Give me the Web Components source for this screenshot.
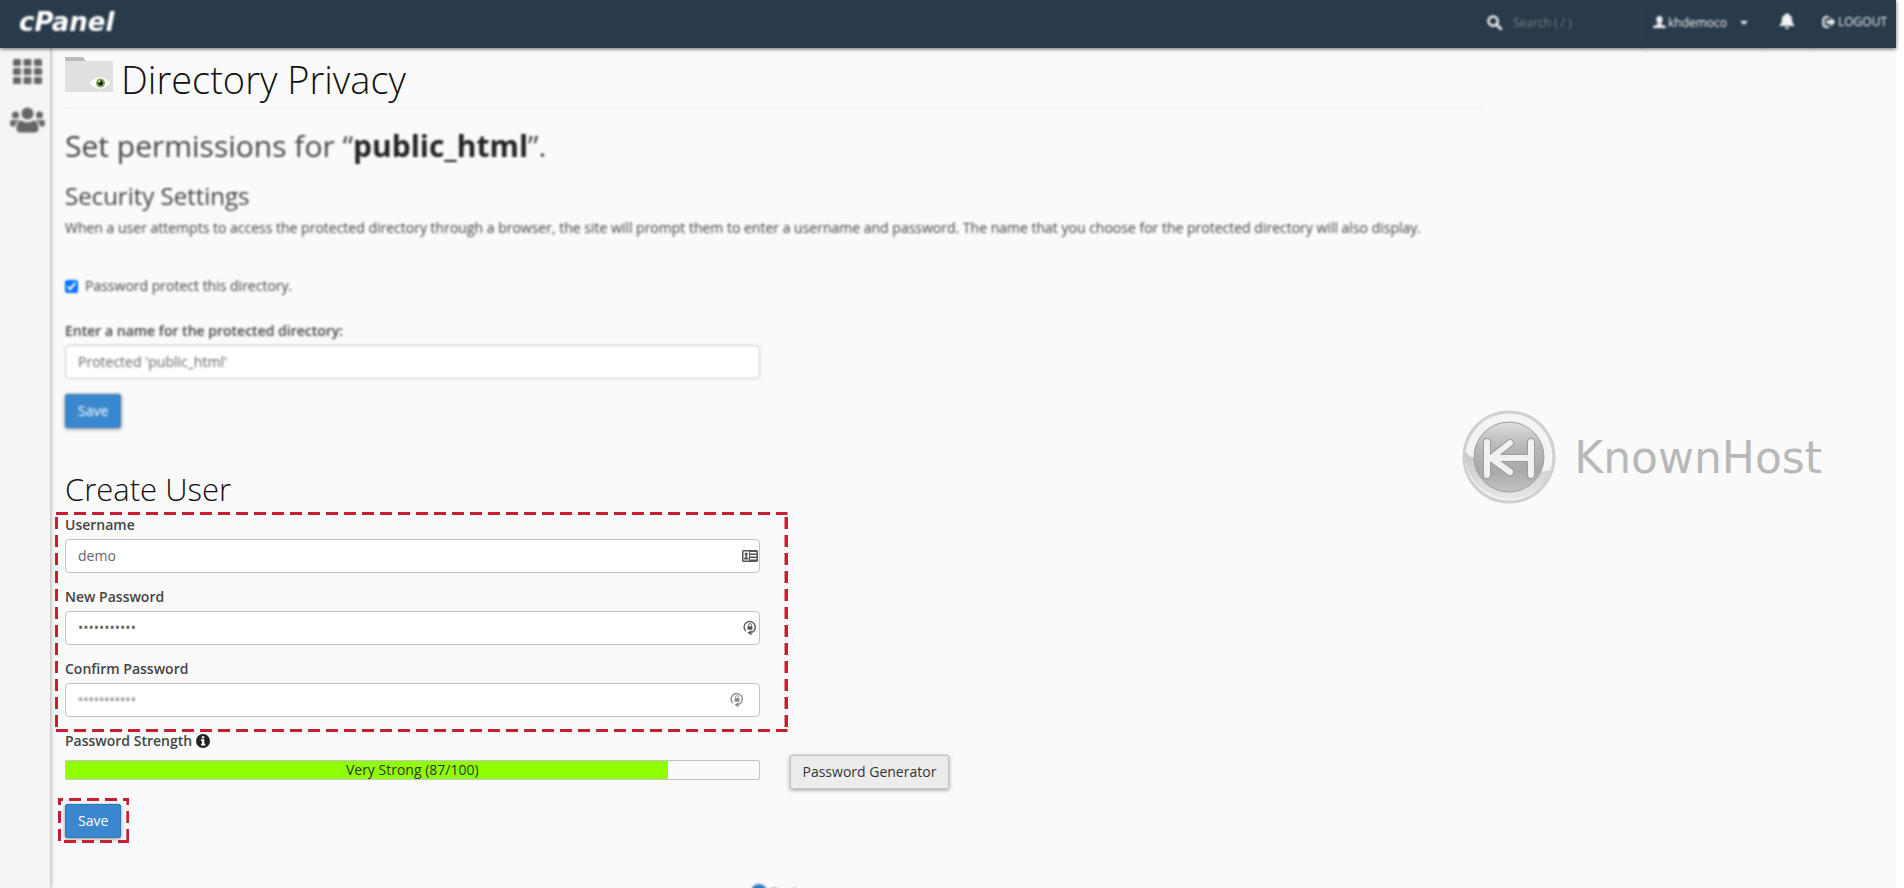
<!DOCTYPE html>
<html lang="en">
<head>
<meta charset="utf-8">
<title>Directory Privacy</title>
<style>
  html, body { margin: 0; height: 100%; }
  body {
    background: #fff;
    color: #333;
    font-family: "Open Sans", "Noto Sans", sans-serif;
    font-size: 14px;
    line-height: 20px;
    overflow: hidden;
  }
</style>
</head>
<body>
<cp-app></cp-app>

<script>
const icons = {
  search: '<svg viewBox="0 0 16 16"><circle cx="6.5" cy="6.5" r="5" fill="none" stroke="currentColor" stroke-width="2.6"/><path d="M10 10l5 5" stroke="currentColor" stroke-width="3" stroke-linecap="round"/></svg>',
  user: '<svg viewBox="0 0 14 14"><path fill="currentColor" d="M7 0c2.3 0 3.400 1.500 3.400 3.700 0 1.800-.8 3.200-1.700 4v1.300l4 1.600c.9.4 1.300 1.100 1.300 2V13H0v-.400c0-.9.4-1.600 1.300-2l4-1.600V7.700c-.9-.8-1.700-2.200-1.700-4C3.600 1.500 4.700 0 7 0z"/></svg>',
  bell: '<svg viewBox="0 0 16 16"><path fill="currentColor" d="M8 0c.8 0 1.200.5 1.200 1.200C11.500 1.800 13 3.500 13 6c0 3.500 1 5 2.500 6.200V13H.5v-.8C2 11 3 9.500 3 6c0-2.500 1.500-4.200 3.800-4.800C6.800.5 7.200 0 8 0zM6 14h4c0 1.200-.9 2-2 2s-2-.8-2-2z"/></svg>',
  logout: '<svg viewBox="0 0 14 14"><path d="M7 2H4.500A3 3 0 0 0 1.500 5v4a3 3 0 0 0 3 3H7" fill="none" stroke="currentColor" stroke-width="2.200"/><path fill="currentColor" d="M4.500 5.300h4V2.500L13.500 7l-5 4.500V8.700h-4z"/></svg>',
  grid: '<svg viewBox="0 0 29 25"><g fill="currentColor"><rect width="8" height="7" rx="1.500"/><rect x="10.500" width="8" height="7" rx="1.500"/><rect x="21" width="8" height="7" rx="1.500"/><rect y="9" width="8" height="7" rx="1.500"/><rect x="10.500" y="9" width="8" height="7" rx="1.500"/><rect x="21" y="9" width="8" height="7" rx="1.500"/><rect y="18" width="8" height="7" rx="1.500"/><rect x="10.500" y="18" width="8" height="7" rx="1.500"/><rect x="21" y="18" width="8" height="7" rx="1.500"/></g></svg>',
  users: '<svg viewBox="0 0 35 26"><g fill="currentColor"><circle cx="17.500" cy="6.500" r="6"/><circle cx="5.500" cy="8" r="3.500"/><circle cx="29.500" cy="8" r="3.500"/><path d="M11.500 13.500c1.600 1.200 3.600 1.800 6 1.800s4.400-.6 6-1.800c4 .5 5 4.500 5 8.500 0 2.200-1.500 3.500-3.700 3.500H10.200C8 25.500 6.500 24.200 6.500 22c0-4 1-8 5-8.500zM2.500 12.500c1 .6 2 .9 3 .9s2-.3 2.700-.8l1.300.4c-2.700 1.400-4.200 3.600-4.500 6.500H3c-2 0-3-1-3-2.800 0-2.200.7-3.900 2.500-4.200zM32.500 12.500c-1 .6-2 .9-3 .9s-2-.3-2.700-.8l-1.300.4c2.700 1.400 4.200 3.600 4.500 6.500h2c2 0 3-1 3-2.800 0-2.200-.7-3.900-2.500-4.200z"/></g></svg>',
  folder: '<svg viewBox="0 0 48 35"><path fill="#bbb" d="M0 0h18l3 4v4H0z"/><path fill="#e0e0e0" d="M0 4h48v31H0z"/><path fill="#fff" d="M25 26c3-4 6-5.500 10-5.500S42 22 45 26c-3 4-6 5.500-10 5.500S28 30 25 26z"/><circle cx="35.500" cy="26" r="4.500" fill="#80a853"/><circle cx="35.500" cy="26" r="2.500" fill="#182818"/><circle cx="34.300" cy="24.600" r="1" fill="#fff"/></svg>',
  card: '<svg viewBox="0 0 16 12"><rect width="16" height="12" rx="1.500" fill="#555"/><path fill="#fff" d="M1.500 1.500H7v9H1.500zM8 2h6.500v1.500H8zM8 5h6.500v1.500H8zM8 8h6.500v1.500H8z"/><circle cx="4.200" cy="4" r="1.600" fill="#555"/><path fill="#555" d="M3.500 5h1.400v2l1.600 1.200v1.300H2V8.200L3.500 7z"/></svg>',
  lock: '<svg viewBox="0 0 14 16"><path d="M2.800 11.200A5.600 5.600 0 1 1 8.500 12.500" fill="none" stroke="#666" stroke-width="1.500"/><path fill="#555" d="M8.500 10.200v5L4.500 12.800z"/><rect x="4.600" y="6.200" width="4.800" height="3.500" fill="#555"/><path d="M5.600 6.500V5a1.400 1.400 0 0 1 2.800 0v1.500" fill="none" stroke="#777"/></svg>',
  info: '<svg viewBox="0 0 14 14"><circle cx="7" cy="7" r="7" fill="#222"/><path fill="#fff" d="M5.800 2.200h2.500v2H5.800zM5 5.300h3.300v4.500h1V11.500H5V9.800h1V7H5z"/></svg>'
};

class CpIcon extends HTMLElement {
  constructor() {
    super();
    this.attachShadow({ mode: 'open' });
  }

  connectedCallback() {
    this.shadowRoot.innerHTML = `
      <style>
        :host { display: inline-block; width: 14px; flex: none; }
        svg { display: block; width: 100%; }
      </style>
      ${icons[this.getAttribute('name')]}
    `;
  }
}

class CpHeader extends HTMLElement {
  constructor() {
    super();
    this.attachShadow({ mode: 'open' });
  }

  connectedCallback() {
    this.shadowRoot.innerHTML = `
      <style>
        :host {
          display: block;
          position: relative;
          z-index: 2;
          background: #293a4a;
          color: #f0f2f4;
          font-size: 12px;
          box-shadow: 0 1px 4px rgba(0, 0, 0, 0.6);
        }
        header {
          display: flex;
          align-items: stretch;
          height: 48px;
          filter: blur(1px);
        }
        a { color: inherit; text-decoration: none; display: flex; align-items: center; }
        .brand {
          margin-right: auto;
          padding: 0 0 4px 19px;
          font: italic bold 26px "DejaVu Sans", sans-serif;
          color: #fff;
        }
        .search { display: flex; align-items: center; gap: 11px; width: 155px; padding-bottom: 3px; }
        .search cp-icon { width: 15px; }
        input {
          width: 110px;
          padding: 0;
          border: 0;
          background: none;
          font: inherit;
          color: inherit;
        }
        input::placeholder { color: #75828e; opacity: 1; }
        button {
          display: flex;
          align-items: center;
          padding: 0 0 3px;
          border: 0;
          border-left: 1px solid #2f4254;
          background: none;
          color: inherit;
          font: inherit;
        }
        .user { width: 121px; padding-left: 10px; gap: 2px; }
        .user cp-icon { width: 13px; }
        .caret {
          margin-left: 11px;
          border: 4px solid transparent;
          border-top-color: currentColor;
          border-bottom: 0;
        }
        .bell { width: 48px; justify-content: center; padding: 0 2px 6px 0; }
        .bell cp-icon { width: 16px; }
        .logout { width: 85px; box-sizing: border-box; padding: 0 0 4px 10px; gap: 2px; border-left: 1px solid #2f4254; }
      </style>
      <header>
        <a class="brand" href="#">cPanel</a>
        <label class="search">
          <cp-icon name="search"></cp-icon>
          <input type="text" placeholder="Search ( / )" aria-label="Search">
        </label>
        <button class="user" type="button"><cp-icon name="user"></cp-icon>khdemoco<span class="caret"></span></button>
        <button class="bell" type="button" aria-label="Notifications"><cp-icon name="bell"></cp-icon></button>
        <a class="logout" href="#"><cp-icon name="logout"></cp-icon>LOGOUT</a>
      </header>
    `;
  }
}

class CpSidebar extends HTMLElement {
  constructor() {
    super();
    this.attachShadow({ mode: 'open' });
  }

  connectedCallback() {
    this.shadowRoot.innerHTML = `
      <style>
        :host {
          display: block;
          flex: none;
          width: 50px;
          background: #f5f5f5;
          color: #666;
          box-shadow: 1px 0 4px rgba(0, 0, 0, 0.3);
        }
        nav {
          display: flex;
          flex-direction: column;
          align-items: center;
          gap: 23px;
          padding: 11px 0 0 5px;
          filter: blur(1px);
        }
        a { color: inherit; }
        cp-icon { display: block; }
        .grid { width: 29px; }
        .users { width: 35px; }
      </style>
      <nav>
        <a href="#" aria-label="Home"><cp-icon class="grid" name="grid"></cp-icon></a>
        <a href="#" aria-label="User Manager"><cp-icon class="users" name="users"></cp-icon></a>
      </nav>
    `;
  }
}

class CpButton extends HTMLElement {
  constructor() {
    super();
    this.attachShadow({ mode: 'open' });
  }

  connectedCallback() {
    this.shadowRoot.innerHTML = `
      <style>
        :host { display: inline-block; }
        button {
          display: block;
          padding: 6px 12px;
          border: 1px solid #2d77b8;
          border-radius: 2px;
          background: #3a87cf;
          color: #fff;
          font: inherit;
          line-height: 20px;
          white-space: nowrap;
          box-shadow: 0 1px 4px rgba(0, 0, 0, 0.4);
        }
        :host([plain]) button {
          border-color: #c4c4c4;
          background: #ececec;
          color: #333;
        }
      </style>
      <button type="button"><slot></slot></button>
    `;
  }
}

class CpField extends HTMLElement {
  constructor() {
    super();
    this.attachShadow({ mode: 'open' });
  }

  connectedCallback() {
    const type = this.getAttribute('type') || 'text';
    const icon = this.getAttribute('icon');
    this.shadowRoot.innerHTML = `
      <style>
        :host { display: block; }
        label {
          display: block;
          margin-bottom: 4px;
          font-weight: 600;
          color: #444;
        }
        .box {
          display: flex;
          align-items: center;
          box-sizing: border-box;
          height: 34px;
          padding: 0 1px 0 12px;
          border: 1px solid #c4c4c4;
          border-radius: 4px;
          background: #fff;
        }
        input {
          flex: 1;
          min-width: 0;
          padding: 0;
          border: 0;
          outline: 0;
          background: none;
          font: inherit;
          color: #666;
        }
        :host([dim]) input { color: #777; filter: blur(1px); }
        cp-icon { width: 14px; margin-right: 1px; }
        cp-icon[name="card"] { width: 16px; margin-right: 0; }
        :host([dim]) cp-icon { margin-right: 14px; opacity: 0.7; }
      </style>
      <label for="input">${this.getAttribute('label')}</label>
      <div class="box">
        <input id="input" type="${type}" value="${this.getAttribute('value') || ''}">
        ${icon ? `<cp-icon name="${icon}"></cp-icon>` : ''}
      </div>
    `;
  }
}

// Dashed red frame laid over whatever is slotted in
class CpCallout extends HTMLElement {
  constructor() {
    super();
    this.attachShadow({ mode: 'open' });
  }

  connectedCallback() {
    this.shadowRoot.innerHTML = `
      <style>
        :host { display: block; position: relative; }
        svg {
          position: absolute;
          inset: -3px -28px -15px -10px;
          width: calc(100% + 38px);
          height: calc(100% + 18px);
          pointer-events: none;
          overflow: hidden;
        }
        :host([tight]) svg {
          inset: -6px -8px -5px -7px;
          width: calc(100% + 15px);
          height: calc(100% + 11px);
        }
        line { stroke: #c41e30; stroke-width: 6; stroke-dasharray: 12 6; }
        .side { stroke-dashoffset: 13; }
        :host([tight]) line { stroke-dashoffset: 8; }
        :host([tight]) .side { stroke-dashoffset: 5; }
        :host([tight]) .bottom { stroke-dashoffset: 13; }
      </style>
      <slot></slot>
      <svg aria-hidden="true">
        <line x1="1" y1="0" x2="100%" y2="0"/>
        <line class="bottom" x1="1" y1="100%" x2="100%" y2="100%"/>
        <line class="side" x1="0" y1="0" x2="0" y2="100%"/>
        <line class="side" x1="100%" y1="0" x2="100%" y2="100%"/>
      </svg>
    `;
  }
}

class CpStrength extends HTMLElement {
  constructor() {
    super();
    this.attachShadow({ mode: 'open' });
  }

  connectedCallback() {
    const value = this.getAttribute('value');
    this.shadowRoot.innerHTML = `
      <style>
        :host { display: block; }
        .label { display: flex; align-items: center; gap: 4px; margin-bottom: 9px; font-weight: 600; color: #444; }
        .bar {
          display: grid;
          height: 18px;
          border: 1px solid #c4c4c4;
          border-radius: 2px;
          line-height: 18px;
          text-align: center;
        }
        .fill, .text { grid-area: 1 / 1; }
        .fill { width: ${value}%; background: #90ff00; }
      </style>
      <div class="label"><span id="label">Password Strength</span><cp-icon name="info"></cp-icon></div>
      <div class="bar" role="meter" aria-labelledby="label" aria-valuemax="100" aria-valuenow="${value}">
        <div class="fill"></div>
        <div class="text">Very Strong (${value}/100)</div>
      </div>
    `;
  }
}

class HostMark extends HTMLElement {
  constructor() {
    super();
    this.attachShadow({ mode: 'open' });
  }

  connectedCallback() {
    this.shadowRoot.innerHTML = `
      <style>
        :host {
          display: flex;
          align-items: center;
          gap: 18px;
          color: #b8b8b8;
          font: 44px "DejaVu Sans", sans-serif;
        }
        svg { width: 94px; height: 94px; flex: none; }
      </style>
      <svg viewBox="0 0 94 94" aria-hidden="true">
        <defs>
          <linearGradient id="disc" x2="0" y2="1"><stop stop-color="#dedede"/><stop offset="0.350" stop-color="#b8b8b8"/><stop offset="0.700" stop-color="#a9a9a9"/><stop offset="1" stop-color="#c4c4c4"/></linearGradient>
          <linearGradient id="ring" x2="0" y2="1"><stop stop-color="#c8c8c8"/><stop offset="1" stop-color="#e6e6e6"/></linearGradient>
        </defs>
        <circle cx="47" cy="47" r="45" fill="#f4f4f4" stroke="#d0d0d0" stroke-width="3"/>
        <path d="M3 42C20 57 50 67 90 60A45 45 0 0 1 3 42z" fill="url(#ring)"/>
        <circle cx="47" cy="47" r="35" fill="url(#disc)" stroke="#9d9d9d"/>
        <g fill="none" stroke-linecap="round" stroke-linejoin="round">
          <path d="M25 32v33M48 33L29 48 48 62M37 48h31M69 32v33" stroke="#9c9c9c" stroke-width="8"/>
          <path d="M25 32v33M48 33L29 48 48 62M37 48h31M69 32v33" stroke="#f1f1f1" stroke-width="6"/>
        </g>
      </svg>
      <span>KnownHost</span>
    `;
  }
}

class CpApp extends HTMLElement {
  constructor() {
    super();
    this.attachShadow({ mode: 'open' });
  }

  connectedCallback() {
    this.shadowRoot.innerHTML = `
      <style>
        :host {
          display: flex;
          flex-direction: column;
          height: 100vh;
          margin-right: 8px;
          background: #fafafa;
        }
        .body { display: flex; flex: 1; min-height: 0; }
        main { position: relative; flex: 1; padding-left: 15px; }
        .content { width: 77.5%; }
        .title {
          display: flex;
          align-items: flex-start;
          gap: 8px;
          padding: 9px 0;
          border-bottom: 1px solid #eee;
        }
        .title cp-icon { width: 48px; }
        h1, h2, h3, p { margin: 0; }
        h1 { padding-top: 2px; font-size: 38px; line-height: 40px; font-weight: 300; color: #111; }
        h2 { font-size: 30px; line-height: 34px; font-weight: 400; }
        h3 { font-size: 24px; line-height: 28px; font-weight: 400; }
        .soft { margin-top: 20px; filter: blur(1px); color: #444; }
        .soft h2 b { font-weight: 700; color: #222; }
        .soft h3 { margin-top: 19px; }
        .soft p { margin-top: 8px; }
        .soft cp-button { margin-top: 15px; }
        .soft cp-field { margin-top: 25px; }
        .check { display: flex; align-items: center; gap: 7px; margin-top: 38px; }
        .check input { width: 13px; height: 13px; margin: 0; }
        .columns {
          display: grid;
          grid-template-columns: 1fr 1fr;
          column-gap: 30px;
        }
        .create { margin-top: 44px; font-size: 31px; font-weight: 300; color: #111; }
        .fields { display: grid; gap: 14px; margin: 9px 0 14px; }
        .generator { margin-top: 24px; }
        .save { width: max-content; margin-top: 15px; }
        cp-button { vertical-align: top; }
        footer {
          margin-top: 45px;
          text-align: center;
          filter: blur(1px);
        }
        footer svg { width: 48px; height: 14px; }
        host-mark { position: absolute; right: 74px; top: 362px; }
      </style>
      <cp-header></cp-header>
      <div class="body">
        <cp-sidebar></cp-sidebar>
        <main>
          <div class="content">
            <div class="title"><cp-icon name="folder"></cp-icon><h1>Directory Privacy</h1></div>
            <section class="soft">
              <h2>Set permissions for “<b>public_html</b>”.</h2>
              <h3>Security Settings</h3>
              <p>When a user attempts to access the protected directory through a browser, the site will prompt them to enter a username and password. The name that you choose for the protected directory will also display.</p>
              <label class="check"><input type="checkbox" checked>Password protect this directory.</label>
              <div class="columns">
                <cp-field label="Enter a name for the protected directory:" value="Protected 'public_html'"></cp-field>
              </div>
              <cp-button>Save</cp-button>
            </section>
            <h2 class="create">Create User</h2>
            <div class="columns">
              <cp-callout class="fields">
                <cp-field label="Username" value="demo" icon="card"></cp-field>
                <cp-field label="New Password" type="password" value="khdemo12345" icon="lock"></cp-field>
                <cp-field label="Confirm Password" type="password" value="khdemo12345" icon="lock" dim></cp-field>
              </cp-callout>
            </div>
            <div class="columns">
              <cp-strength value="87"></cp-strength>
              <cp-button class="generator" plain>Password Generator</cp-button>
            </div>
            <cp-callout class="save" tight><cp-button>Save</cp-button></cp-callout>
            <footer>
              <svg viewBox="0 0 48 14" aria-hidden="true" fill="#2f7fc4"><circle cx="8" cy="8" r="8"/><path d="M18 14V8q0-4 5-4t5 4v6h-3V9q0-2-2-2t-2 2v5zM43 4h2v10h-2z"/></svg>
            </footer>
          </div>
          <host-mark></host-mark>
        </main>
      </div>
    `;
  }
}

customElements.define('cp-icon', CpIcon);
customElements.define('cp-header', CpHeader);
customElements.define('cp-sidebar', CpSidebar);
customElements.define('cp-button', CpButton);
customElements.define('cp-field', CpField);
customElements.define('cp-callout', CpCallout);
customElements.define('cp-strength', CpStrength);
customElements.define('host-mark', HostMark);
customElements.define('cp-app', CpApp);
</script>
</body>
</html>
